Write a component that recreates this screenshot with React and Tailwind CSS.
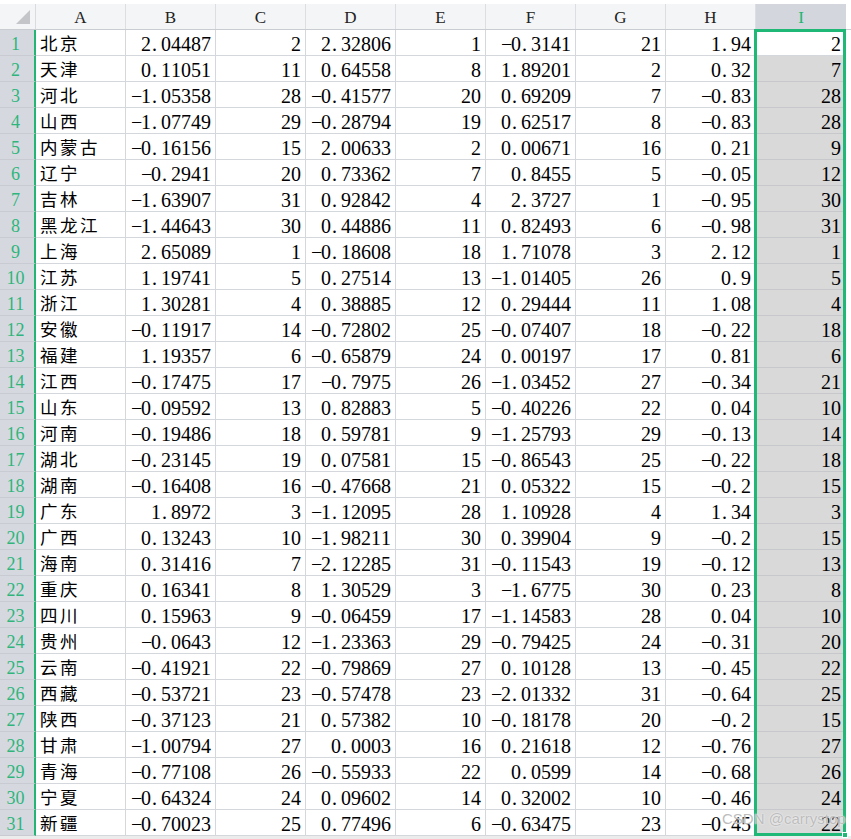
import React from "react";

const rows = [
  ["北京", "2.04487", "2", "2.32806", "1", "-0.3141", "21", "1.94", "2"],
  ["天津", "0.11051", "11", "0.64558", "8", "1.89201", "2", "0.32", "7"],
  ["河北", "-1.05358", "28", "-0.41577", "20", "0.69209", "7", "-0.83", "28"],
  ["山西", "-1.07749", "29", "-0.28794", "19", "0.62517", "8", "-0.83", "28"],
  ["内蒙古", "-0.16156", "15", "2.00633", "2", "0.00671", "16", "0.21", "9"],
  ["辽宁", "-0.2941", "20", "0.73362", "7", "0.8455", "5", "-0.05", "12"],
  ["吉林", "-1.63907", "31", "0.92842", "4", "2.3727", "1", "-0.95", "30"],
  ["黑龙江", "-1.44643", "30", "0.44886", "11", "0.82493", "6", "-0.98", "31"],
  ["上海", "2.65089", "1", "-0.18608", "18", "1.71078", "3", "2.12", "1"],
  ["江苏", "1.19741", "5", "0.27514", "13", "-1.01405", "26", "0.9", "5"],
  ["浙江", "1.30281", "4", "0.38885", "12", "0.29444", "11", "1.08", "4"],
  ["安徽", "-0.11917", "14", "-0.72802", "25", "-0.07407", "18", "-0.22", "18"],
  ["福建", "1.19357", "6", "-0.65879", "24", "0.00197", "17", "0.81", "6"],
  ["江西", "-0.17475", "17", "-0.7975", "26", "-1.03452", "27", "-0.34", "21"],
  ["山东", "-0.09592", "13", "0.82883", "5", "-0.40226", "22", "0.04", "10"],
  ["河南", "-0.19486", "18", "0.59781", "9", "-1.25793", "29", "-0.13", "14"],
  ["湖北", "-0.23145", "19", "0.07581", "15", "-0.86543", "25", "-0.22", "18"],
  ["湖南", "-0.16408", "16", "-0.47668", "21", "0.05322", "15", "-0.2", "15"],
  ["广东", "1.8972", "3", "-1.12095", "28", "1.10928", "4", "1.34", "3"],
  ["广西", "0.13243", "10", "-1.98211", "30", "0.39904", "9", "-0.2", "15"],
  ["海南", "0.31416", "7", "-2.12285", "31", "-0.11543", "19", "-0.12", "13"],
  ["重庆", "0.16341", "8", "1.30529", "3", "-1.6775", "30", "0.23", "8"],
  ["四川", "0.15963", "9", "-0.06459", "17", "-1.14583", "28", "0.04", "10"],
  ["贵州", "-0.0643", "12", "-1.23363", "29", "-0.79425", "24", "-0.31", "20"],
  ["云南", "-0.41921", "22", "-0.79869", "27", "0.10128", "13", "-0.45", "22"],
  ["西藏", "-0.53721", "23", "-0.57478", "23", "-2.01332", "31", "-0.64", "25"],
  ["陕西", "-0.37123", "21", "0.57382", "10", "-0.18178", "20", "-0.2", "15"],
  ["甘肃", "-1.00794", "27", "0.0003", "16", "0.21618", "12", "-0.76", "27"],
  ["青海", "-0.77108", "26", "-0.55933", "22", "0.0599", "14", "-0.68", "26"],
  ["宁夏", "-0.64324", "24", "0.09602", "14", "0.32002", "10", "-0.46", "24"],
  ["新疆", "-0.70023", "25", "0.77496", "6", "-0.63475", "23", "-0.45", "22"],
];

const cols = ["A", "B", "C", "D", "E", "F", "G", "H", "I"];

function Num({ v }) {
  const s = v.replace("-", "\u2212");
  return (
    <span className="inline-flex">
      {[...s].map((c, i) => (
        <span
          key={i}
          className={
            c === "."
              ? "inline-block w-[10px] text-left pl-[1px]"
              : "inline-block w-[10px] text-center"
          }
        >
          {c}
        </span>
      ))}
    </span>
  );
}

export default function App() {
  return (
    <div className="relative w-[851px] h-[839px] bg-white overflow-hidden font-['Liberation_Serif',serif] text-black">
      {/* header */}
      <div className="grid grid-cols-[36px_repeat(9,90px)] h-[30px] pt-[4px] border-b border-[#c9ccd1]">
        <div className="flex items-end justify-end pr-[5px] pb-[5px] bg-[#f4f5f6] border-r border-[#d9dbde]">
          <svg width="14" height="14" viewBox="0 0 14 14">
            <polygon points="14,0 14,14 0,14" fill="#c3c5c8" />
          </svg>
        </div>
        {cols.map((c) =>
          c === "I" ? (
            <div
              key={c}
              className="flex items-center justify-center bg-[#d3d6dc] text-[17px] leading-none text-[#22b573] pt-[2px]"
            >
              {c}
            </div>
          ) : (
            <div
              key={c}
              className="flex items-center justify-center bg-[#f4f5f6] border-r border-[#dcdee1] text-[17px] leading-none text-[#222] pt-[2px]"
            >
              {c}
            </div>
          )
        )}
      </div>

      {/* body */}
      {rows.map((r, i) => (
        <div key={i} className="grid grid-cols-[36px_repeat(9,90px)] h-[26px]">
          <div className="flex items-center justify-center pr-[3px] pt-[2px] bg-[#d5d9df] border-r-2 border-[#22b573] border-b border-b-[#c8ccd2] text-[18px] leading-none text-[#2fb57c]">
            {i + 1}
          </div>
          <div className="flex items-center pl-[4px] pt-[1px] border-r border-b border-[#d4d7dc] text-[17.5px] tracking-[2.5px] leading-none font-['Noto_Sans_CJK_SC',sans-serif]">
            {r[0]}
          </div>
          {r.slice(1, 8).map((v, j) => (
            <div
              key={j}
              className="flex items-center justify-end pr-[4px] pt-[3px] border-r border-b border-[#d4d7dc] text-[20px] leading-none"
            >
              <Num v={v} />
            </div>
          ))}
          <div
            className={
              i === 0
                ? "flex items-center justify-end pr-[5px] pt-[3px] border-b border-[#d4d7dc] bg-white text-[20px] leading-none"
                : "flex items-center justify-end pr-[5px] pt-[3px] border-b border-[#c6c8cc] bg-[#d9d9d9] text-[20px] leading-none"
            }
          >
            <Num v={r[8]} />
          </div>
        </div>
      ))}

      {/* bottom strip */}
      <div className="h-[3px] bg-[#ececec]" />

      {/* selection border */}
      <div className="absolute left-[754px] top-[29px] w-[92px] h-[807px] border-[3px] border-[#1fb877] pointer-events-none" />
      <div className="absolute left-[842px] top-[832px] w-[6px] h-[6px] bg-[#1fb877] border border-white" />

      {/* watermark */}
      <div className="absolute left-[722px] top-[811px] text-[15px] leading-none font-['Liberation_Sans',sans-serif] text-[#bdbdbd] [text-shadow:0_0_2px_#ffffff]">
        CSDN @carrystop
      </div>
    </div>
  );
}
